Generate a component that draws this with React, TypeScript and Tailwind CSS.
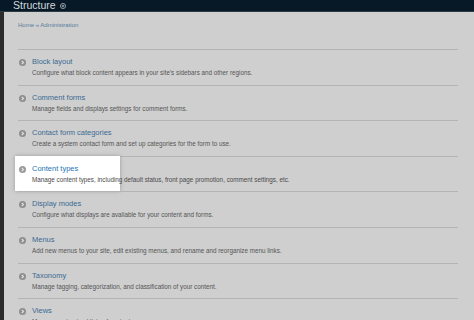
import React from "react";

const items = [
  { title: "Block layout", desc: "Configure what block content appears in your site's sidebars and other regions." },
  { title: "Comment forms", desc: "Manage fields and displays settings for comment forms." },
  { title: "Contact form categories", desc: "Create a system contact form and set up categories for the form to use." },
  { title: "Content types", desc: "Manage content types, including default status, front page promotion, comment settings, etc.", active: true },
  { title: "Display modes", desc: "Configure what displays are available for your content and forms." },
  { title: "Menus", desc: "Add new menus to your site, edit existing menus, and rename and reorganize menu links." },
  { title: "Taxonomy", desc: "Manage tagging, categorization, and classification of your content." },
  { title: "Views", desc: "Manage customized lists of content." },
];

function Arrow({ active }: { active?: boolean }) {
  return (
    <svg width="7" height="7" viewBox="0 0 10 10" className="shrink-0">
      <circle cx="5" cy="5" r="5" fill={active ? "#9a9a9a" : "#8e8e8e"} />
      <path d="M4 2.6 L6.4 5 L4 7.4" fill="none" stroke="#e6e6e6" strokeWidth="1.6" />
    </svg>
  );
}

export default function App() {
  return (
    <div
      className="w-[474px] h-[320px] overflow-hidden flex flex-col bg-[#1d2125]"
      style={{ fontFamily: '"Liberation Sans", Arial, sans-serif' }}
    >
      <div className="h-[12px] shrink-0 bg-[#071927] flex items-start pl-[13px] gap-[4px] border-b border-[#2c3a44]">
        <span className="text-[10.5px] leading-[10px] text-[#d3d9de]">Structure</span>
        <svg width="6" height="6" viewBox="0 0 10 10" className="mt-[3px]">
          <circle cx="5" cy="5" r="4.3" fill="none" stroke="#c0c6cc" strokeWidth="1.2" />
          <path d="M5 2.8 V7.2 M2.8 5 H7.2" stroke="#c0c6cc" strokeWidth="1.3" />
        </svg>
      </div>
      <div className="flex-1 flex">
        <div className="w-[4px] bg-[#2b2b2b] shrink-0" />
        <div className="flex-1 bg-[#cfcfcf] pl-[14px] pr-[16px]">
          <div className="pt-[10px] h-[37px] text-[6px] leading-[6px] text-[#557c9e]">
            Home » Administration
          </div>
          {items.map((it) => (
            <div key={it.title} className="relative h-[35.6px] border-t border-[#b4b4b4]">
              {it.active && (
                <div className="absolute left-[-3px] top-[-1px] w-[105px] h-[35px] bg-white shadow-[0_0_4px_rgba(0,0,0,0.25)]" />
              )}
              <div className="relative flex items-start pl-[1px] pt-[7px] gap-[6px]">
                <div className="mt-[2px]">
                  <Arrow active={it.active} />
                </div>
                <div>
                  <div className={`text-[7.5px] leading-[10px] ${it.active ? "text-[#1f73b5]" : "text-[#3a6b93]"}`}>
                    {it.title}
                  </div>
                  <div className={`mt-[2px] text-[6.3px] leading-[8px] whitespace-nowrap ${it.active ? "text-[#4a4a4a]" : "text-[#555555]"}`}>
                    {it.desc}
                  </div>
                </div>
              </div>
            </div>
          ))}
        </div>
      </div>
    </div>
  );
}
